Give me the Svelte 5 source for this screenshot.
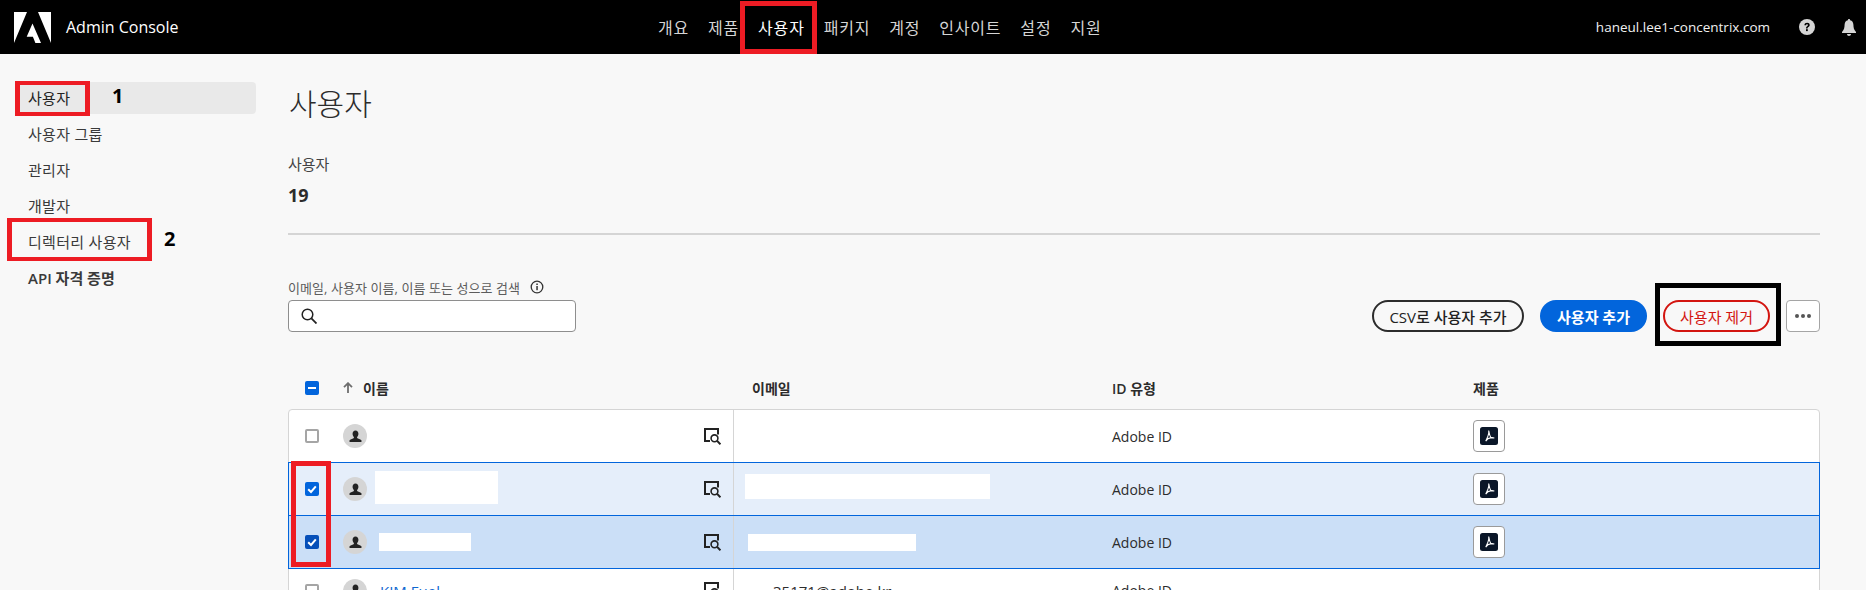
<script>
  const navItems = ['개요', '제품', '사용자', '패키지', '계정', '인사이트', '설정', '지원'];
  const sideItems = ['사용자', '사용자 그룹', '관리자', '개발자', '디렉터리 사용자', 'API 자격 증명'];
  const rows = [
    { state: '', name: '', email: '', nameBlock: '', mailBlock: '' },
    { state: 'sel', name: '', email: '', nameBlock: 'nb2', mailBlock: 'mb2' },
    { state: 'sel focus', name: '', email: '', nameBlock: 'nb3', mailBlock: 'mb3' },
    { state: 'last', name: 'KIM Fuel', email: '35171@adobe.kr', nameBlock: '', mailBlock: '' }
  ];
</script>

<div class="root">
  <header class="top">
    <div class="brand">
      <svg class="logo" viewBox="0 0 37 31" aria-hidden="true">
        <path d="M0 0h13L0 31zM24 0h13v31zM18.5 11.5 27 31h-5.6l-2.5-6.3h-6.2z" fill="#fff"/>
      </svg>
      <span class="brand-name">Admin Console</span>
    </div>
    <nav class="nav">
      {#each navItems as item, i}
        <span class:on={i === 2}>{item}</span>
      {/each}
    </nav>
    <div class="right">
      <span class="account">haneul.lee1-concentrix.com</span>
      <svg class="help" viewBox="0 0 16 16" aria-hidden="true">
        <circle cx="8" cy="8" r="8" fill="#d5d5d5"/>
        <path d="M5.4 6.2C5.5 4.6 6.6 3.8 8.1 3.8c1.6 0 2.6.9 2.6 2.2 0 1-.6 1.6-1.3 2.1-.6.4-.8.7-.8 1.3H7c0-1 .3-1.6 1.1-2.2.6-.4.9-.7.9-1.1 0-.5-.4-.8-.9-.8-.6 0-1 .4-1 1z" fill="#000"/>
        <rect x="7" y="10.2" width="1.8" height="1.9" fill="#000"/>
      </svg>
      <svg class="bell" viewBox="0 0 14 17" aria-hidden="true">
        <path d="M7 0c.7 0 1.1.5 1.1 1.2 2.2.5 3.2 2.2 3.3 4.6.1 3 .5 5 2.6 7.3v.9H0v-.9c2.100-2.300 2.500-4.300 2.600-7.300.1-2.400 1.100-4.100 3.300-4.600C5.900.5 6.300 0 7 0zM5 15h4c0 1.200-.9 2-2 2s-2-.8-2-2z" fill="#d5d5d5"/>
      </svg>
    </div>
  </header>

  <div class="body">
    <aside class="side">
      {#each sideItems as item, i}
        <div class="side-item" class:active={i === 0} class:strong={i === 5}>{item}</div>
      {/each}
    </aside>

    <main class="main">
      <h1>사용자</h1>
      <div class="stat-label">사용자</div>
      <div class="stat-value">19</div>
      <hr />

      <div class="tools">
        <div class="search">
          <div class="search-label">
            <span>이메일, 사용자 이름, 이름 또는 성으로 검색</span>
            <svg viewBox="0 0 14 14" aria-hidden="true">
              <circle cx="7" cy="7" r="5.8" fill="none" stroke="#333" stroke-width="1.3"/>
              <rect x="6.300" y="6" width="1.500" height="4.200" fill="#333"/>
              <rect x="6.300" y="3.500" width="1.500" height="1.500" fill="#333"/>
            </svg>
          </div>
          <div class="search-box">
            <svg viewBox="0 0 16 16" aria-hidden="true">
              <circle cx="6.500" cy="6.500" r="5.300" fill="none" stroke="#222" stroke-width="1.500"/>
              <path d="M10.400 10.400 15.500 15.500" stroke="#222" stroke-width="1.800"/>
            </svg>
          </div>
        </div>
        <div class="actions">
          <button class="btn outline">CSV로 사용자 추가</button>
          <button class="btn primary">사용자 추가</button>
          <button class="btn danger">사용자 제거</button>
          <button class="more" aria-label="더 보기"><i></i><i></i><i></i></button>
        </div>
      </div>

      <div class="thead">
        <div class="cell check">
          <span class="box indet"></span>
        </div>
        <div class="cell name-h">
          <svg viewBox="0 0 10 11" aria-hidden="true">
            <path d="M5 11V1.500M1 5.200 5 1.200 9 5.200" fill="none" stroke="#6e6e6e" stroke-width="1.800"/>
          </svg>
          이름
        </div>
        <div class="cell mail-h">이메일</div>
        <div class="cell">ID 유형</div>
        <div class="cell">제품</div>
      </div>

      <div class="table">
        {#each rows as row}
          <div class="row {row.state}">
            <div class="cell check">
              <span class="box" class:checked={row.state.includes('sel')}>
                {#if row.state.includes('sel')}
                  <svg viewBox="0 0 14 14" aria-hidden="true">
                    <path d="M3.200 7.200 6 10l4.800-5.600" fill="none" stroke="#fff" stroke-width="2"/>
                  </svg>
                {/if}
              </span>
            </div>
            <div class="cell name">
              <span class="avatar">
                <svg viewBox="0 0 12 12" aria-hidden="true">
                  <path d="M6 .5c1.700 0 2.700 1.200 2.700 3 0 1.300-.5 2.300-1.100 2.900-.3.300-.2.900.2 1.100 1.300.5 3.200 1 3.700 2v1.500H.5V9.500c.5-1 2.400-1.500 3.700-2 .4-.2.500-.8.2-1.100C3.800 5.800 3.300 4.800 3.300 3.500c0-1.800 1-3 2.700-3z" fill="#222"/>
                </svg>
              </span>
              {#if row.nameBlock}<span class="block {row.nameBlock}"></span>{/if}
              {#if row.name}<span class="link">{row.name}</span>{/if}
              <svg class="inspect" viewBox="0 0 17 17" aria-hidden="true">
                <path d="M6 13H1V1h13v5.500" fill="none" stroke="#222" stroke-width="2"/>
                <circle cx="10.500" cy="10.300" r="3.400" fill="none" stroke="#222" stroke-width="1.600"/>
                <path d="M13 12.800 16.500 16.300" stroke="#222" stroke-width="2"/>
              </svg>
            </div>
            <div class="cell mail">
              {#if row.mailBlock}<span class="block {row.mailBlock}"></span>{/if}
              {#if row.email}<span class="mail-text">{row.email}</span>{/if}
            </div>
            <div class="cell id">Adobe ID</div>
            <div class="cell">
              {#if row.state !== 'last'}
                <span class="product">
                  <svg viewBox="0 0 18 18" aria-hidden="true">
                    <rect width="18" height="18" rx="2.500" fill="#0a1628"/>
                    <path d="M8.700 3.500c.5 2.800 1 5.200 2 6.700l3.600.8-3.800-.1c-1.300 0-3 .6-4.800 3.200 1.400-2.800 2.700-5 3-7.800.1-1.100.1-2.100 0-2.800z" fill="none" stroke="#fff" stroke-width="1.100"/>
                  </svg>
                </span>
              {/if}
            </div>
          </div>
        {/each}
      </div>
    </main>
  </div>

  <!-- markup drawn over the screenshot -->
  <div class="mark red nav-mark"></div>
  <div class="mark red side1"></div>
  <div class="mark red side2"></div>
  <div class="mark red rows-mark"></div>
  <div class="mark black btn-mark"></div>
  <span class="num n1">1</span>
  <span class="num n2">2</span>
</div>

<style>
  :global(body) {
    margin: 0;
    background: #f8f8f8;
  }
  .root {
    position: relative;
    height: 590px;
    overflow: hidden;
    background: #f8f8f8;
    color: #2c2c2c;
    font-family: "Open Sans", "Noto Sans CJK KR", sans-serif;
    font-size: 15px;
  }
  .top {
    display: flex;
    align-items: center;
    height: 54px;
    background: #000;
    color: #fff;
  }
  .brand {
    display: flex;
    align-items: center;
    width: 658px;
    padding-left: 14px;
    box-sizing: border-box;
  }
  .logo {
    width: 37px;
    height: 31px;
    margin-right: 15px;
  }
  .brand-name {
    font-size: 16px;
  }
  .nav {
    display: flex;
    gap: 19px;
    font-size: 16px;
    letter-spacing: 0.8px;
    color: #d5d5d5;
  }
  .nav .on {
    color: #fff;
  }
  .right {
    display: flex;
    align-items: center;
    margin-left: auto;
    padding-right: 10px;
  }
  .account {
    font-size: 13.5px;
    color: #f0f0f0;
  }
  .help {
    width: 16px;
    height: 16px;
    margin-left: 29px;
  }
  .bell {
    width: 14px;
    height: 17px;
    margin-left: 27px;
  }
  .body {
    display: flex;
  }
  .side {
    width: 288px;
    box-sizing: border-box;
    padding: 28px 32px 0 17px;
    flex: none;
  }
  .side-item {
    height: 32px;
    line-height: 32px;
    padding-left: 11px;
    margin-bottom: 4px;
    border-radius: 4px;
    letter-spacing: 0.3px;
    color: #3a3a3a;
  }
  .side-item.active {
    background: #e9e9e9;
    color: #222;
  }
  .side-item.strong {
    font-weight: 600;
    letter-spacing: 0;
  }
  .main {
    width: 1532px;
    flex: none;
  }
  h1 {
    margin: 33px 0 0 1px;
    font-size: 30px;
    line-height: 34px;
    font-weight: 300;
    color: #2c2c2c;
  }
  .stat-label {
    margin-top: 32px;
    line-height: 22px;
    color: #444;
  }
  .stat-value {
    margin-top: 8px;
    font-size: 18px;
    line-height: 24px;
    font-weight: 700;
  }
  hr {
    height: 2px;
    margin: 26px 0 0;
    border: 0;
    background: #d5d5d5;
  }
  .tools {
    display: flex;
    justify-content: space-between;
    align-items: flex-end;
    margin-top: 43px;
  }
  .search-label {
    display: flex;
    align-items: center;
    gap: 10px;
    height: 18px;
    margin-bottom: 4px;
    font-size: 13px;
    letter-spacing: 0.07px;
    color: #5c5c5c;
  }
  .search-label svg {
    width: 14px;
    height: 14px;
  }
  .search-box {
    display: flex;
    align-items: center;
    box-sizing: border-box;
    width: 288px;
    height: 32px;
    padding-left: 12px;
    background: #fff;
    border: 1px solid #8e8e8e;
    border-radius: 4px;
  }
  .search-box svg {
    width: 16px;
    height: 16px;
  }
  .actions {
    display: flex;
    align-items: center;
  }
  .btn {
    height: 32px;
    padding: 0;
    border-radius: 16px;
    font-family: inherit;
    font-size: 15px;
    font-weight: 500;
    background: transparent;
  }
  .outline {
    width: 152px;
    border: 2px solid #2c2c2c;
    color: #222;
    margin-right: 16px;
  }
  .primary {
    width: 107px;
    border: 0;
    background: #0265dc;
    color: #fff;
    font-weight: 700;
    margin-right: 16px;
  }
  .danger {
    width: 107px;
    border: 2px solid #d31510;
    color: #d31510;
    font-weight: 400;
    margin-right: 16px;
  }
  .more {
    display: flex;
    align-items: center;
    justify-content: center;
    gap: 2px;
    width: 34px;
    height: 32px;
    padding: 0;
    background: #fff;
    border: 1px solid #a5a5a5;
    border-radius: 4px;
  }
  .more i {
    width: 4px;
    height: 4px;
    border-radius: 50%;
    background: #555;
  }
  .thead,
  .row {
    display: grid;
    grid-template-columns: 54px 391px 378px 361px 1fr;
    align-items: center;
  }
  .thead {
    height: 43px;
    margin-top: 34px;
    margin-left: 1px;
    font-size: 14px;
    font-weight: 600;
  }
  .table {
    border: 1px solid #d5d5d5;
    border-radius: 4px 4px 0 0;
    background: #fff;
  }
  .cell {
    display: flex;
    align-items: center;
    min-width: 0;
  }
  .check {
    justify-content: flex-start;
    padding-left: 16px;
  }
  .box {
    display: block;
    box-sizing: border-box;
    width: 14px;
    height: 14px;
    border: 2px solid #a5a5a5;
    border-radius: 2px;
    background: #fff;
  }
  .box.checked,
  .box.indet {
    position: relative;
    border: 0;
    background: #0265dc;
  }
  .box svg {
    display: block;
    width: 14px;
    height: 14px;
  }
  .box.indet::after {
    content: "";
    position: absolute;
    left: 3px;
    top: 6px;
    width: 8px;
    height: 2px;
    background: #fff;
  }
  .name-h {
    gap: 10px;
  }
  .name-h svg {
    width: 10px;
    height: 11px;
  }
  .mail-h {
    padding-left: 18px;
  }
  .row {
    box-sizing: border-box;
    height: 53px;
    border-bottom: 1px solid transparent;
  }
  .row.sel {
    height: 54px;
    margin: -1px -1px 0;
    border: 1px solid #0265dc;
    background: #e5eefa;
  }
  .row.focus {
    background: #cbdff7;
  }
  .row.focus .box {
    background: #054fb9;
  }
  .row.last {
    height: 44px;
  }
  .row > .cell {
    height: 100%;
  }
  .name {
    border-right: 1px solid #d5d5d5;
    box-sizing: border-box;
  }
  .avatar {
    display: flex;
    align-items: center;
    justify-content: center;
    flex: none;
    width: 24px;
    height: 24px;
    border-radius: 50%;
    background: #d5d5d5;
  }
  .avatar svg {
    width: 13px;
    height: 13px;
  }
  .inspect {
    flex: none;
    width: 17px;
    height: 17px;
    margin: 0 12px 0 auto;
  }
  .block {
    display: block;
    background: #fff;
  }
  .nb2 {
    width: 123px;
    height: 33px;
    margin: 0 0 3px 8px;
  }
  .nb3 {
    width: 92px;
    height: 18px;
    margin: 0 0 0 12px;
  }
  .mb2 {
    width: 245px;
    height: 25px;
    margin: 0 0 6px 11px;
  }
  .mb3 {
    width: 168px;
    height: 17px;
    margin: 0 0 0 14px;
  }
  .link {
    margin-left: 13px;
    color: #0d66d0;
  }
  .mail-text {
    margin-left: 39px;
  }
  .id {
    font-size: 14px;
  }
  .product {
    display: flex;
    align-items: center;
    justify-content: center;
    box-sizing: border-box;
    width: 32px;
    height: 32px;
    background: #fff;
    border: 1px solid #9a9a9a;
    border-radius: 4px;
  }
  .product svg {
    width: 18px;
    height: 18px;
  }
  .mark {
    position: absolute;
    box-sizing: border-box;
    border-style: solid;
  }
  .red {
    border-color: #ed1c24;
  }
  .black {
    border-color: #000;
  }
  .nav-mark {
    left: 740px;
    top: 1px;
    width: 77px;
    height: 53px;
    border-width: 5px;
  }
  .side1 {
    left: 15px;
    top: 81px;
    width: 75px;
    height: 35px;
    border-width: 4px 5px;
  }
  .side2 {
    left: 7px;
    top: 218px;
    width: 145px;
    height: 43px;
    border-width: 4px 5px;
  }
  .rows-mark {
    left: 291px;
    top: 461px;
    width: 40px;
    height: 106px;
    border-width: 5px;
  }
  .btn-mark {
    left: 1655px;
    top: 283px;
    width: 126px;
    height: 63px;
    border-width: 5px;
  }
  .num {
    position: absolute;
    font-size: 20px;
    line-height: 20px;
    font-weight: 700;
    color: #000;
  }
  .n1 {
    left: 112px;
    top: 86px;
  }
  .n2 {
    left: 164px;
    top: 229px;
  }
</style>
